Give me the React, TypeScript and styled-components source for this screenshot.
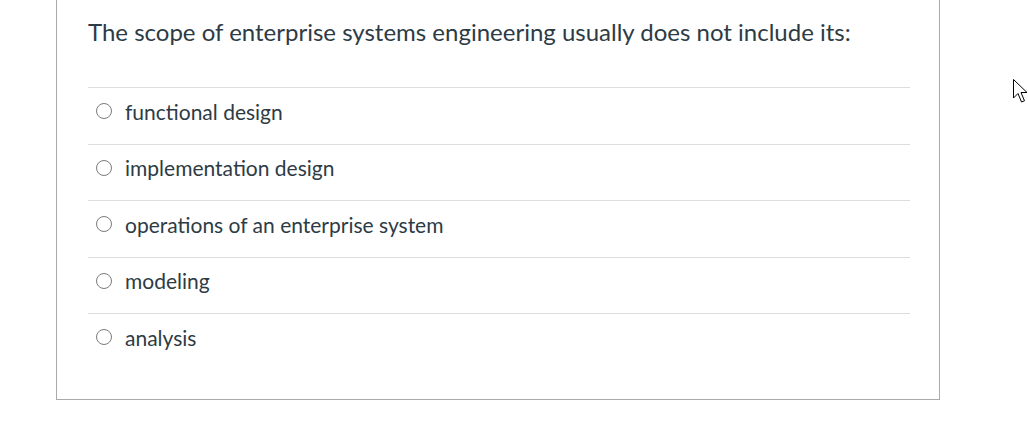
import React from "react";
import styled, { createGlobalStyle } from "styled-components";

const GlobalStyle = createGlobalStyle`
  html, body {
    margin: 0;
    padding: 0;
    background: #fff;
    font-family: Lato, "Open Sans", sans-serif;
    color: #2d3b45;
  }
`;

const Page = styled.div`
  position: relative;
  width: 1028px;
  height: 425px;
  overflow: hidden;
`;

const Card = styled.div`
  box-sizing: border-box;
  margin-left: 56px;
  width: 884px;
  height: 400px;
  border: 1px solid #aaaaaa;
  border-top: none;
  padding: 13px 29px 0 31px;
`;

const Question = styled.div`
  font-size: 24px;
  line-height: 37px;
  padding-bottom: 37px;
`;

const AnswerList = styled.div`
  display: flex;
  flex-direction: column;
`;

const Answer = styled.label`
  display: flex;
  align-items: center;
  gap: 13px;
  height: 56.5px;
  box-sizing: border-box;
  border-top: 1px solid #dddddd;
  padding: 0 0 9px 8px;
  font-size: 21px;
  cursor: pointer;
`;

const Radio = styled.span`
  box-sizing: border-box;
  width: 16px;
  height: 16px;
  border-radius: 50%;
  border: 1.5px solid #7a7a7a;
  flex-shrink: 0;
`;

const Cursor = styled.svg`
  position: absolute;
  left: 1012px;
  top: 78px;
`;

const answers = [
  "functional design",
  "implementation design",
  "operations of an enterprise system",
  "modeling",
  "analysis",
];

export default function App() {
  return (
    <Page>
      <GlobalStyle />
      <Card>
        <Question>
          The scope of enterprise systems engineering usually does not include its:
        </Question>
        <AnswerList>
          {answers.map((a) => (
            <Answer key={a}>
              <Radio />
              {a}
            </Answer>
          ))}
        </AnswerList>
      </Card>
      <Cursor width="18" height="28" viewBox="0 0 18 28">
        <path
          d="M1.5 1.5 L1.5 20 L6 15.5 L9.5 24 L12.5 22.8 L9 14.5 L15 14.5 Z"
          fill="#fff"
          stroke="#000"
          strokeWidth="1"
          strokeLinejoin="miter"
        />
      </Cursor>
    </Page>
  );
}
